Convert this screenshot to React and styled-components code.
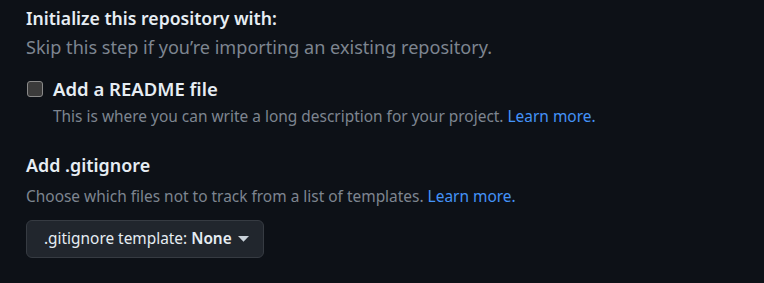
import React from "react";
import styled, { createGlobalStyle } from "styled-components";

const GlobalStyle = createGlobalStyle`
  html, body {
    margin: 0;
    padding: 0;
    background: #0d1117;
  }
  body {
    font-family: "Noto Sans", "Liberation Sans", sans-serif;
    color: #e6edf3;
  }
`;

const Wrapper = styled.div`
  width: 764px;
  height: 283px;
  box-sizing: border-box;
  padding: 5px 26px 0;
  background: #0d1117;
`;

const Title = styled.h2`
  margin: ${(p) => p.top || 0}px 0 0;
  font-size: ${(p) => p.size || 17.6}px;
  font-weight: 600;
  line-height: 26px;
  color: #e6edf3;
`;

const Lead = styled.p`
  margin: ${(p) => p.top || 0}px 0 0;
  font-size: ${(p) => (p.large ? 18.1 : 15.45)}px;
  line-height: ${(p) => (p.large ? 27 : 23)}px;
  color: #7d8590;
`;

const Link = styled.a`
  color: #4493f8;
  text-decoration: none;
`;

const CheckRow = styled.label`
  display: flex;
  align-items: flex-start;
  gap: 10px;
  margin-top: 14px;
  cursor: pointer;
`;

const Box = styled.span`
  flex: none;
  box-sizing: border-box;
  width: 16px;
  height: 16px;
  margin: 6px 0 0 1px;
  border: 1px solid #8a8a8a;
  border-radius: 3px;
  background: #3b3b3b;
`;

const CheckText = styled.div`
  display: flex;
  flex-direction: column;
`;

const CheckLabel = styled.span`
  font-size: 18.5px;
  font-weight: 600;
  line-height: 28px;
  color: #e6edf3;
`;

const Select = styled.button`
  display: inline-flex;
  align-items: center;
  gap: 6px;
  margin-top: 11.5px;
  box-sizing: border-box;
  height: 38px;
  padding: 0 14px 0 17px;
  border: 1px solid #363b42;
  border-radius: 6px;
  background: #21262d;
  color: #e6edf3;
  font-family: inherit;
  font-size: 15.4px;
  cursor: pointer;
`;

const Strong = styled.b`
  font-weight: 600;
`;

const CaretIcon = styled.svg`
  color: #c9d1d9;
`;

const Caret = () => (
  <CaretIcon width="11" height="6" viewBox="0 0 11 6" fill="currentColor">
    <path d="M0 0h11L5.5 5.8z" />
  </CaretIcon>
);

export default function App() {
  return (
    <>
      <GlobalStyle />
      <Wrapper>
        <Title>Initialize this repository with:</Title>
        <Lead large top={2.5}>
          Skip this step if you’re importing an existing repository.
        </Lead>

        <CheckRow>
          <Box />
          <CheckText>
            <CheckLabel>Add a README file</CheckLabel>
            <Lead top={2.7}>
              This is where you can write a long description for your project.{" "}
              <Link href="#">Learn more.</Link>
            </Lead>
          </CheckText>
        </CheckRow>

        <Title top={23.7} size={17.9}>
          Add .gitignore
        </Title>
        <Lead top={7.3}>
          Choose which files not to track from a list of templates.{" "}
          <Link href="#">Learn more.</Link>
        </Lead>
        <Select>
          <span>
            .gitignore template: <Strong>None</Strong>
          </span>
          <Caret />
        </Select>
      </Wrapper>
    </>
  );
}
